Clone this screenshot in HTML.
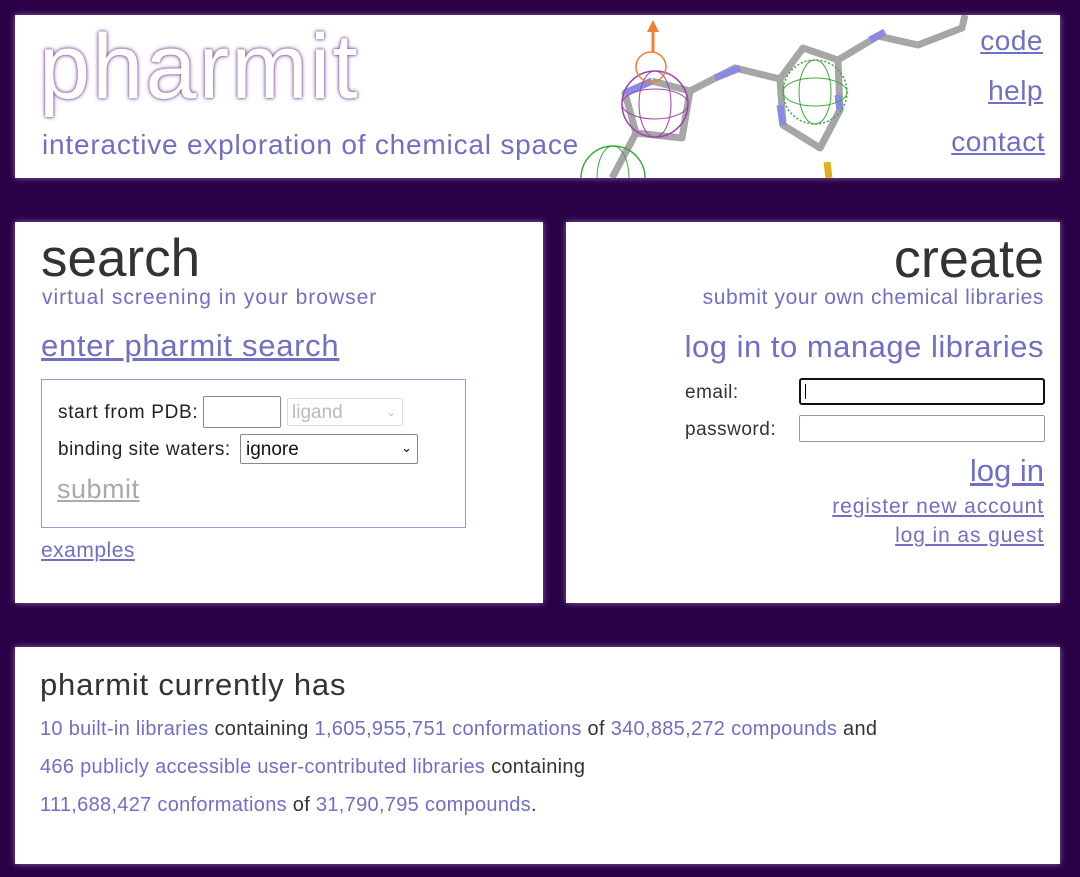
<!DOCTYPE html>
<html><head><meta charset="utf-8"><style>
body{margin:0;width:1080px;height:877px;background:#2a0046;font-family:"Liberation Sans",sans-serif;position:relative;overflow:hidden}
.box{position:absolute;background:#fff;box-shadow:0 0 6px rgba(200,170,230,.6)}
.a{position:absolute;white-space:nowrap}
a{color:#6f6fc6;text-decoration:underline}
.l{color:#6f6fc6}
.d{color:#333}
</style></head><body>
<div class="box" style="left:15px;top:15px;width:1045px;height:163px;overflow:hidden">
 <div class="a" style="left:24px;top:0px;font-size:92px;color:#fff;text-shadow:0 0 5px #7a4d9a,0 0 2px #7a4d9a;letter-spacing:2px">pharmit</div>
 <div class="a l" style="left:27px;top:114px;font-size:28px;letter-spacing:0.8px">interactive exploration of chemical space</div>
 <svg class="a" style="left:555px;top:0" width="400" height="163" viewBox="570 15 400 163">
  <g fill="none" stroke="#a6a6a6" stroke-width="7" stroke-linejoin="round">
   <polyline points="652,81 690,91 735,68 780,79 803,48 838,60 840,110 820,148"/>
   <polyline points="780,79 783,125 820,148 840,110"/>
   <polyline points="838,60 878,36 918,45 962,28 965,15"/>
   <polyline points="652,81 625,93 636,133 682,138 690,91"/>
   <polyline points="636,133 612,178"/>
  </g>
  <g stroke="#8a8ae0" stroke-width="7" fill="none"><line x1="625" y1="93" x2="652" y2="81"/><line x1="715" y1="78" x2="740" y2="68"/><line x1="780" y1="105" x2="783" y2="125"/><line x1="838" y1="95" x2="840" y2="110"/><line x1="870" y1="40" x2="885" y2="32"/></g>
  <line x1="827" y1="162" x2="829" y2="178" stroke="#e0b020" stroke-width="7"/>
  <circle cx="815" cy="92" r="32" fill="none" stroke="#3aaa3a" stroke-width="1.5" stroke-dasharray="2 2"/>
  <ellipse cx="815" cy="92" rx="16" ry="32" fill="none" stroke="#3aaa3a" stroke-width="1"/>
  <ellipse cx="815" cy="92" rx="32" ry="14" fill="none" stroke="#3aaa3a" stroke-width="1"/>
  <circle cx="655" cy="104" r="33" fill="none" stroke="#a040b0" stroke-width="1.5"/>
  <ellipse cx="655" cy="104" rx="16" ry="33" fill="none" stroke="#a040b0" stroke-width="1"/>
  <ellipse cx="655" cy="104" rx="33" ry="15" fill="none" stroke="#a040b0" stroke-width="1"/>
  <circle cx="651" cy="67" r="15" fill="none" stroke="#f08030" stroke-width="1.5"/>
  <line x1="653" y1="52" x2="653" y2="28" stroke="#f08030" stroke-width="3"/>
  <polygon points="647,32 653,20 659,32" fill="#f08030"/>
  <circle cx="613" cy="178" r="32" fill="none" stroke="#3aaa3a" stroke-width="1.5"/>
  <ellipse cx="613" cy="178" rx="16" ry="32" fill="none" stroke="#3aaa3a" stroke-width="1"/>
 </svg>
 <a class="a" style="right:17px;top:10px;font-size:28px;letter-spacing:0.5px">code</a>
 <a class="a" style="right:17px;top:60px;font-size:28px;letter-spacing:0.5px">help</a>
 <a class="a" style="right:15px;top:111px;font-size:28px;letter-spacing:0.5px">contact</a>
</div>

<div class="box" style="left:15px;top:222px;width:528px;height:381px">
 <div class="a d" style="left:26px;top:6px;font-size:53px">search</div>
 <div class="a l" style="left:27px;top:64px;font-size:21px;letter-spacing:1px">virtual screening in your browser</div>
 <a class="a" style="left:26px;top:106px;font-size:31px;letter-spacing:0.7px">enter pharmit search</a>
 <div class="a" style="left:26px;top:157px;width:423px;height:147px;border:1px solid #9a9ad8"></div>
 <div class="a" style="left:43px;top:180px;font-size:19px;color:#222;letter-spacing:0.7px">start from PDB:</div>
 <div class="a" style="left:188px;top:174px;width:76px;height:30px;border:1px solid #888;border-radius:2px"></div>
 <div class="a" style="left:272px;top:176px;width:116px;height:28px;border:1px solid #ddd;border-radius:2px;color:#bbb;font-size:19px;line-height:28px;padding-left:4px;box-sizing:border-box">ligand<span style="position:absolute;right:6px;font-size:11px">&#8964;</span></div>
 <div class="a" style="left:43px;top:217px;font-size:19px;color:#222;letter-spacing:0.5px">binding site waters:</div>
 <div class="a" style="left:225px;top:212px;width:178px;height:30px;border:1px solid #888;border-radius:2px;color:#111;font-size:19px;line-height:29px;padding-left:5px;box-sizing:border-box">ignore<span style="position:absolute;right:5px;top:-2px;font-size:13px">&#8964;</span></div>
 <a class="a" style="left:42px;top:252px;font-size:27px;color:#aaa;letter-spacing:0.5px">submit</a>
 <a class="a" style="left:26px;top:317px;font-size:21px;letter-spacing:0.5px">examples</a>
</div>

<div class="box" style="left:566px;top:222px;width:494px;height:381px">
 <div class="a d" style="right:16px;top:6px;font-size:54px">create</div>
 <div class="a l" style="right:16px;top:64px;font-size:21px;letter-spacing:0.6px">submit your own chemical libraries</div>
 <div class="a l" style="right:16px;top:107px;font-size:31px;letter-spacing:0.5px">log in to manage libraries</div>
 <div class="a" style="left:119px;top:160px;font-size:19px;color:#333;letter-spacing:0.5px">email:</div>
 <div class="a" style="left:233px;top:156px;width:246px;height:27px;border:2px solid #111;border-radius:3px;box-sizing:border-box"><div style="position:absolute;left:4px;top:4px;width:1px;height:15px;background:#000"></div></div>
 <div class="a" style="left:119px;top:197px;font-size:19px;color:#333;letter-spacing:0.5px">password:</div>
 <div class="a" style="left:233px;top:193px;width:246px;height:27px;border:1px solid #999;border-radius:2px;box-sizing:border-box"></div>
 <a class="a" style="right:16px;top:231px;font-size:31px">log in</a>
 <a class="a" style="right:16px;top:273px;font-size:21px;letter-spacing:0.9px">register new account</a>
 <a class="a" style="right:16px;top:302px;font-size:21px;letter-spacing:0.9px">log in as guest</a>
</div>

<div class="box" style="left:15px;top:647px;width:1045px;height:217px">
 <div class="a d" style="left:25px;top:20px;font-size:31px;letter-spacing:0.8px">pharmit currently has</div>
 <div class="a" style="left:25px;top:71px;font-size:20px;color:#333;letter-spacing:0.3px"><span class="l">10 built-in libraries</span> containing <span class="l">1,605,955,751 conformations</span> of <span class="l">340,885,272 compounds</span> and</div>
 <div class="a" style="left:25px;top:109px;font-size:20px;color:#333;letter-spacing:0.3px"><span class="l">466 publicly accessible user-contributed libraries</span> containing</div>
 <div class="a" style="left:25px;top:147px;font-size:20px;color:#333;letter-spacing:0.3px"><span class="l">111,688,427 conformations</span> of <span class="l">31,790,795 compounds</span>.</div>
</div>
</body></html>
